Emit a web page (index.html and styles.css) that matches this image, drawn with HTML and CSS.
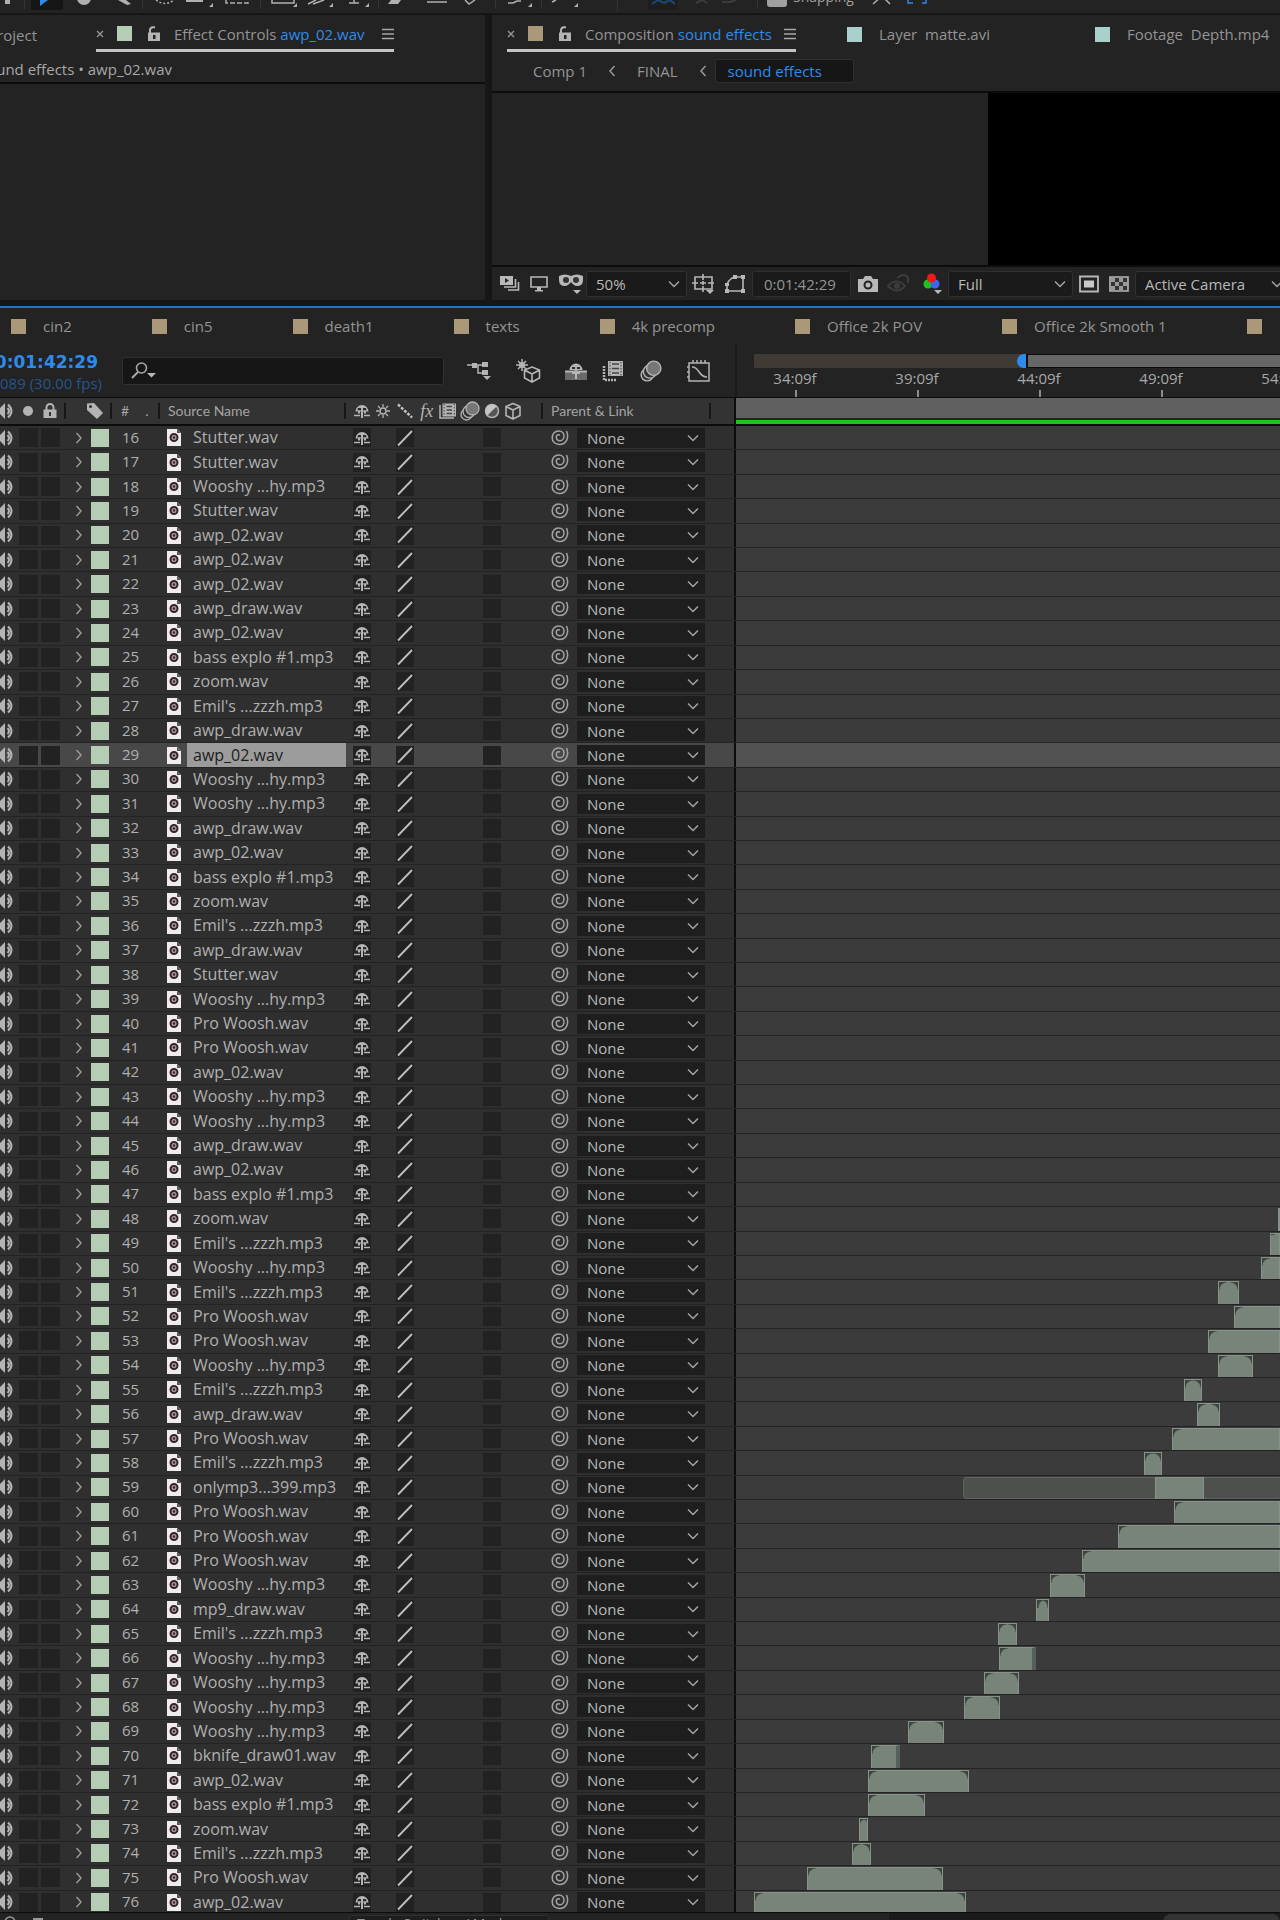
FILE: index.html
```html
<!DOCTYPE html>
<html lang="en">
<head>
<meta charset="utf-8">
<title>sound effects – Timeline</title>
<meta name="viewport" content="width=device-width, initial-scale=1">
<link rel="stylesheet" href="styles.css">
</head>
<body>
<svg class="sprite" aria-hidden="true">
  <symbol id="i-speaker" viewBox="0 0 20 18"><path d="M0 6h4l5-5v16l-5-5H0z" fill="#b4b4b4"/><path d="M11.500 6q3 3 0 6M12 2.500q7 6.500 0 13" fill="none" stroke="#b4b4b4" stroke-width="2"/></symbol>
  <symbol id="i-lock" viewBox="0 0 14 16"><path d="M3.500 7V4.500a3.500 3.500 0 0 1 7 0V7" fill="none" stroke="#b4b4b4" stroke-width="2"/><path d="M0.500 6.500h13V15H.5z" fill="#b4b4b4"/><path d="M6 9h2v4H6z" fill="#333"/></symbol>
  <symbol id="i-unlock" viewBox="0 0 14 16"><path d="M3 8V4.500q0-3 3-3.200h2" fill="none" stroke="#b4b4b4" stroke-width="2"/><path d="M1 6.500h12V15H1z" fill="#b4b4b4"/><path d="M6 9h2.500v4H6z" fill="#232323"/></symbol>
  <symbol id="i-tag" viewBox="0 0 18 18"><path d="M1 1.500 8 1l9 10-6 6L1 8z" fill="#b4b4b4"/><circle cx="4.500" cy="4.500" r="1.500" fill="#333"/></symbol>
  <symbol id="i-shy" viewBox="0 0 18 16"><path d="M2.500 8.500a6.500 6.500 0 0 1 13 0z" fill="#b4b4b4"/><path d="M5 5h3v2.500H4.500zM10 5h3l.5 2.500H10z" fill="#2a2a2a"/><path d="M8 8h2v7H8zM5 7.500h2v3H5zM11 7.500h2v3h-2z" fill="#b4b4b4"/><path d="M1 12.500h6M11 12.500h6" stroke="#b4b4b4" stroke-width="1.600"/></symbol>
  <symbol id="i-sun" viewBox="0 0 16 16"><circle cx="8" cy="8" r="3" fill="none" stroke="#b4b4b4" stroke-width="1.500"/><path d="M8 1v3M8 12v3M1 8h3M12 8h3M3 3l2 2M11 11l2 2M13 3l-2 2M5 11l-2 2" stroke="#b4b4b4" stroke-width="1.300"/></symbol>
  <symbol id="i-dots" viewBox="0 0 16 16"><path d="m1 1.500 14 13" stroke="#c4c4c4" stroke-width="2.500" stroke-dasharray="2.800 1.500"/></symbol>
  <symbol id="i-film" viewBox="0 0 18 16"><path d="M1 2v13h14" fill="none" stroke="#b4b4b4" stroke-width="1.500"/><path d="M3.500.5H17v13H3.500z" fill="#b4b4b4"/><path d="M7.500 3.500h5.500M7.500 7h5.500M7.500 10.500h5.500" stroke="#444" stroke-width="1.300"/><path d="M5.200 1v12M15.300 1v12" stroke="#444" stroke-dasharray="1.500 1.500"/></symbol>
  <symbol id="i-blur" viewBox="0 0 20 20"><g stroke="#b4b4b4" stroke-width="1.300"><circle cx="6.500" cy="13.500" r="5.500" fill="#333"/><circle cx="9" cy="10.500" r="6" fill="#333"/><circle cx="12.500" cy="7.500" r="6.500" fill="#777"/></g></symbol>
  <symbol id="i-adjust" viewBox="0 0 16 16"><circle cx="8" cy="8" r="6.500" fill="#555" stroke="#b4b4b4" stroke-width="1.500"/><path d="M12.600 3.400A6.500 6.500 0 0 0 3.400 12.600z" fill="#c4c4c4"/></symbol>
  <symbol id="i-cube" viewBox="0 0 18 18"><path d="m9 1.500 7 3v9l-7 3.500-7-3.500v-9zM2 4.500 9 8l7-3.500M9 8v9" fill="none" stroke="#b4b4b4" stroke-width="1.600" stroke-linejoin="round"/></symbol>
  <symbol id="i-arrow" viewBox="0 0 8 12"><path d="m1.500 1 4.500 5-4.500 5" fill="none" stroke="#999" stroke-width="1.500"/></symbol>
  <symbol id="i-file" viewBox="0 0 14 17"><path d="M0 0h10l4 4v13H0z" fill="#f0ecee"/><path d="M10 0v4h4z" fill="#555"/><circle cx="7" cy="8.500" r="3.500" fill="#b9a0a0" stroke="#32242c" stroke-width="2"/><circle cx="7" cy="8.500" r="1.300" fill="#30283c"/></symbol>
  <symbol id="i-slash" viewBox="0 0 18 18"><path d="M2 16.500 16 2" stroke="#c0c0c0" stroke-width="1.800"/></symbol>
  <symbol id="i-spiral" viewBox="0 0 18 18"><path d="M15.500 2C18.500 9 15 15.500 8.500 15.500 4 15.500 1.200 12.500 1.200 9c0-4.500 3-7 6.300-7 3.700 0 5.500 2.500 5.500 5s-1.500 4.700-4 4.700S5.300 10 5.300 8 7 5.300 9 6" fill="none" stroke="#a4a4a4" stroke-width="1.500"/></symbol>
  <symbol id="i-chevron" viewBox="0 0 12 8"><path d="m1 1.500 5 5 5-5" fill="none" stroke="#a4a4a4" stroke-width="1.500"/></symbol>
  <symbol id="i-menu" viewBox="0 0 12 12"><path d="M0 1.500h12M0 6h12M0 10.500h12" stroke="#a8a8a8" stroke-width="1.500"/></symbol>
  <symbol id="i-x" viewBox="0 0 8 8"><path d="m1 1 6 6M7 1 1 7" stroke="#949494" stroke-width="1.400"/></symbol>
</svg>

<header class="toolbar" role="toolbar" aria-label="Tools">
  <svg class="tools" viewBox="0 0 760 13">
    <g fill="#b0b0b0"><path d="M5 0h5v4H5z"/><circle cx="84" cy="-2" r="7"/><path d="m118 0 9 5 4-1-5-4zM186 0h17v2h-17zM388 4l3-4h10l-3 4zM213 7V3l-4 4zM297 7V3l-4 4zM333 7V3l-4 4zM369 7V3l-4 4zM532 7V3l-4 4zM578 7V3l-4 4z"/></g>
    <path d="M31 0h32v10H31z" fill="#161616"/><path d="M40 0h8l-8 6z" fill="#2d8ceb"/>
    <g stroke="#b0b0b0" stroke-width="1.500" fill="none"><path d="M156 0q9 7 18 0" stroke-dasharray="2 2"/><path d="M226 0v3h22V0" stroke-dasharray="5 2"/><path d="M272 0v3h22V0M308 4l8-4M313 4l11-4M349 3h10M354 0v3M427 2h20M465 0l4 4 6-4M508 3h5l4-2h4M552 2l4-2"/></g>
    <path d="M24.500 0v9M142.500 0v9M260.500 0v9M378.500 0v9M495.500 0v9M541.500 0v9M617.500 0v11M757.500 0v9" stroke="#343434"/>
    <path d="M648 0h30v10h-30z" fill="#1e1e1e"/><path d="m652 4 6-4 6 3 6-3 5 4" stroke="#1c4a75" stroke-width="2" fill="none"/><path d="m696 3 6-3 5 3M722 2h8l6-2" stroke="#3c3c3c" stroke-width="2" fill="none"/>
  </svg>
  <label class="snap"><input type="checkbox" checked><span>Snapping</span></label>
  <svg class="snap-tools" viewBox="0 0 60 13"><path d="m3 4 9-8 8 8" stroke="#b0b0b0" stroke-width="1.500" fill="none"/><path d="M38 0v3h5M52 3h4V0" stroke="#2d8ceb" stroke-width="1.500" fill="none"/></svg>
</header>

<div class="workspace">
  <section class="panel effects">
    <nav class="tabs">
      <a class="cut project" href="#project"><span>Project</span></a>
      <div class="tab active">
        <button class="plain" aria-label="Close"><svg class="s8"><use href="#i-x"/></svg></button>
        <i class="swatch green"></i><svg class="lock"><use href="#i-unlock"/></svg>
        <a href="#fx">Effect Controls <b>awp_02.wav</b></a>
        <button class="plain" aria-label="Panel menu"><svg class="s12"><use href="#i-menu"/></svg></button>
      </div>
    </nav>
    <p class="cut subject"><span>sound effects • awp_02.wav</span></p>
    <div class="panel-body"></div>
  </section>

  <section class="panel composition">
    <nav class="tabs">
      <div class="tab active">
        <button class="plain" aria-label="Close"><svg class="s8"><use href="#i-x"/></svg></button>
        <i class="swatch tan"></i><svg class="lock"><use href="#i-unlock"/></svg>
        <a href="#comp">Composition <b>sound effects</b></a>
        <button class="plain" aria-label="Panel menu"><svg class="s12"><use href="#i-menu"/></svg></button>
      </div>
      <a class="tab side" href="#layer"><i class="swatch aqua"></i><span>Layer&nbsp; matte.avi</span></a>
      <a class="tab side" href="#footage"><i class="swatch aqua"></i><span>Footage&nbsp; Depth.mp4</span></a>
    </nav>
    <nav class="crumbs">
      <a href="#comp1">Comp 1</a><svg class="back"><use href="#i-arrow"/></svg><a href="#final">FINAL</a><svg class="back last"><use href="#i-arrow"/></svg><a class="current" href="#sfx">sound effects</a>
    </nav>
    <div class="viewer"><div class="frame"></div></div>
    <div class="viewbar">
      <button class="plain" aria-label="Always preview"><svg width="22" height="18" viewBox="0 0 22 18"><path d="M1 1h13v9H1z" fill="#b8b8b8"/><path d="m6 3 4 2.500L6 8z" fill="#232323"/><path d="M16.500 4v8H5M19.500 7v8H9" fill="none" stroke="#b8b8b8" stroke-width="1.600"/></svg></button>
      <button class="plain" aria-label="Primary viewer"><svg width="20" height="18" viewBox="0 0 20 18"><path d="M2 2h16v10H2z" fill="none" stroke="#b8b8b8" stroke-width="1.600"/><path d="M8 12h4v3h2v1.500H6V15h2z" fill="#b8b8b8"/></svg></button>
      <button class="plain" aria-label="3D glasses"><svg width="26" height="22" viewBox="-2 0 26 22"><path d="M0 3q6-3 12 0 6-3 12 0v4q0 6-6 6-3 0-6-4-3 4-6 4-6 0-6-6z" fill="#b8b8b8"/><circle cx="7" cy="7" r="3" fill="#333"/><circle cx="17" cy="7" r="3" fill="#333"/><path d="M14 17h8l-4 4z" fill="#b8b8b8"/></svg></button>
      <span class="drop zoom"><select aria-label="Magnification"><option>50%</option></select><svg class="chev"><use href="#i-chevron"/></svg></span>
      <button class="plain" aria-label="Grid and guides"><svg width="22" height="22" viewBox="0 0 22 22"><path d="M3 4h17v12H3zM0 10h6M16 10h6M11 1v6M11 13v6M8 10h6M11 8v4" fill="none" stroke="#b8b8b8" stroke-width="1.600"/><path d="M14 17h8l-4 4z" fill="#b8b8b8"/></svg></button>
      <button class="plain" aria-label="Mask visibility"><svg width="24" height="20" viewBox="-2 0 24 20"><path d="M3 17V10q3-6 8-7h8v14z" fill="none" stroke="#b8b8b8" stroke-width="1.600"/><path d="M1 15h4v4H1zM17 15h4v4h-4zM17 1h4v4h-4zM9 1h4v4H9zM1 9h4v3H1z" fill="#b8b8b8"/></svg></button>
      <input class="time" aria-label="Preview time" value="0:01:42:29">
      <button class="plain" aria-label="Snapshot"><svg width="22" height="18" viewBox="0 0 22 18"><path d="M1 4h5l2-3h6l2 3h5v13H1z" fill="#b8b8b8"/><circle cx="11" cy="10" r="3.500" fill="#b8b8b8" stroke="#232323" stroke-width="2"/></svg></button>
      <button class="plain" aria-label="Show snapshot"><svg width="22" height="20" viewBox="0 0 22 20"><path d="M1 12q8-9 17 0-8 9-17 0z" fill="none" stroke="#3c3c3c" stroke-width="2"/><circle cx="10" cy="12" r="3" fill="#3c3c3c"/><path d="M10 4q8-6 11 0v5" fill="none" stroke="#3c3c3c" stroke-width="2"/></svg></button>
      <button class="plain" aria-label="Channels"><svg width="25" height="22" viewBox="-5 0 25 22"><circle cx="6" cy="11" r="4.500" fill="#1dc21d"/><circle cx="13" cy="11" r="4.500" fill="#4066f0"/><circle cx="9.500" cy="5" r="4.500" fill="#f01818"/><path d="M12 17h8l-4 4z" fill="#b8b8b8"/></svg></button>
      <span class="drop res"><select aria-label="Resolution"><option>Full</option></select><svg class="chev"><use href="#i-chevron"/></svg></span>
      <button class="plain" aria-label="Region of interest"><svg width="22" height="18" viewBox="0 0 22 18"><path d="M2 1.500h18v15H2z" fill="none" stroke="#b8b8b8" stroke-width="1.800"/><path d="M6 5.500h10v7H6z" fill="#c8c8c8"/></svg></button>
      <button class="plain" aria-label="Transparency grid"><svg width="22" height="18" viewBox="0 0 22 18"><path d="M2 2h18v14H2z" fill="#333" stroke="#b8b8b8" stroke-width="1.600"/><path d="M3 3h4v4H3zM11 3h4v4h-4zM7 7h4v4H7zM15 7h4v4h-4zM3 11h4v4H3zM11 11h4v4h-4z" fill="#999"/></svg></button>
      <span class="drop cam"><select aria-label="3D view"><option>Active Camera</option></select><svg class="chev"><use href="#i-chevron"/></svg></span>
    </div>
  </section>
</div>

<main class="timeline">
  <nav class="comps">
    <a href="#c1"><i class="swatch tan"></i>cin2</a>
    <a href="#c2"><i class="swatch tan"></i>cin5</a>
    <a href="#c3"><i class="swatch tan"></i>death1</a>
    <a href="#c4"><i class="swatch tan"></i>texts</a>
    <a href="#c5"><i class="swatch tan"></i>4k precomp</a>
    <a href="#c6"><i class="swatch tan"></i>Office 2k POV</a>
    <a href="#c7"><i class="swatch tan"></i>Office 2k Smooth 1</a>
    <a href="#c8" aria-label="Next composition"><i class="swatch tan"></i></a>
  </nav>
  <div class="controls">
    <div class="controls-left">
      <div class="clock"><div class="cut now"><span>0:01:42:29</span></div><div class="cut fps"><span>3089 (30.00 fps)</span></div></div>
      <div class="search"><svg width="26" height="18" viewBox="0 0 26 18"><circle cx="10.500" cy="6" r="5" fill="none" stroke="#a8a8a8" stroke-width="1.600"/><path d="m7 10-6 6" stroke="#a8a8a8" stroke-width="2"/><path d="M16 11h9l-4.500 4.500z" fill="#b8b8b8"/></svg><input type="search" aria-label="Search layers"></div>
      <div class="modes">
        <button class="plain" aria-label="Mini-flowchart"><svg width="26" height="22" viewBox="0 0 26 22"><path d="M1 5h6M9 5h8M12 5v8h5" stroke="#b4b4b4" stroke-width="1.500" fill="none"/><path d="M6 3h5v5H6zM16 2h6v5h-6zM16 10h6v5h-6zM17 16h8l-4 4z" fill="#b4b4b4"/></svg></button>
        <button class="plain" aria-label="Draft 3D"><svg width="28" height="26" viewBox="0 0 28 26"><path d="M8 1v12M2 7h12M4 3l8 8M12 3l-8 8" stroke="#b4b4b4" stroke-width="1.500"/><circle cx="8" cy="7" r="3" fill="#b4b4b4"/><path d="m18 9 7.500 3v8L18 24l-7.500-4v-8zM10.500 12l7.500 4 7.500-4M18 16v8" fill="#232323" stroke="#b4b4b4" stroke-width="1.600"/></svg></button>
        <button class="plain" aria-label="Hide shy layers"><svg width="24" height="20" viewBox="0 0 24 20"><path d="M1 11h22v8H1z" fill="#6a6a6a"/><path d="M5.500 9a6.500 6.500 0 0 1 13 0zM11 8h2v10h-2zM1 9.500h22v2H1zM8 11h8v2H8z" fill="#b4b4b4"/><path d="M8 6h3v2H8zM13 6h3v2h-3z" fill="#333"/></svg></button>
        <button class="plain" aria-label="Frame blending"><svg width="22" height="22" viewBox="0 0 22 22"><path d="M2 6v14h13" fill="none" stroke="#b4b4b4" stroke-width="2.500" stroke-dasharray="2 1"/><path d="M6 1h15v15H6z" fill="#b4b4b4"/><path d="M10 4h7M10 8.500h7M10 13h7" stroke="#444" stroke-width="1.300"/><path d="M8 2v14M19 2v14" stroke="#444" stroke-dasharray="1.500 1.500"/></svg></button>
        <button class="plain" aria-label="Motion blur"><svg width="22" height="22"><use href="#i-blur"/></svg></button>
        <button class="plain" aria-label="Graph editor"><svg width="24" height="24" viewBox="0 0 24 24"><path d="M2 4h20v18H2zM5 8c8 0 6 10 15 10M6 4V1M10 4V1M14 4V1M18 4V1M2 8H0M2 13H0M2 18H0" fill="none" stroke="#b4b4b4" stroke-width="1.500"/></svg></button>
      </div>
    </div>
    <div class="ruler">
      <div class="navigator"><i class="before"></i><i class="knob"></i><i class="after"></i></div>
      <div class="ticks"><span>34:09f</span><span>39:09f</span><span>44:09f</span><span>49:09f</span><span>54:09f</span></div>
    </div>
  </div>
  <table class="layers">
    <thead><tr>
      <th class="av"><svg class="spk"><use href="#i-speaker"/></svg><i class="solo"></i><svg class="lk"><use href="#i-lock"/></svg></th>
      <th class="label"><svg class="s18"><use href="#i-tag"/></svg></th>
      <th class="num"><span>#</span><span>.</span></th>
      <th class="name">Source Name</th>
      <th class="switches"><svg class="s18"><use href="#i-shy"/></svg><svg class="s16"><use href="#i-sun"/></svg><svg class="s16"><use href="#i-dots"/></svg><em>fx</em><svg class="s18"><use href="#i-film"/></svg><svg class="s20"><use href="#i-blur"/></svg><svg class="s16"><use href="#i-adjust"/></svg><svg class="s18"><use href="#i-cube"/></svg></th>
      <th class="parent">Parent &amp; Link</th>
      <th class="pad"></th>
      <th class="track" aria-label="Work area"></th>
    </tr></thead>
    <tbody id="rows"></tbody>
  </table>
  <footer class="status">
    <div class="status-left"><svg width="60" height="8" viewBox="0 0 60 8"><circle cx="10" cy="9" r="5" fill="none" stroke="#999" stroke-width="1.500"/><path d="M33 5h10v4H33z" fill="#999"/></svg><button>Toggle Switches / Modes</button></div>
    <div class="scroll"><i></i></div>
  </footer>
</main>
<script src="layers.js"></script>
</body>
</html>
```

FILE: styles.css
```css
* { box-sizing: border-box; }
body {
  margin: 0; min-height: 100vh; display: flex; flex-direction: column;
  background: #161616; color: #949494; overflow-x: hidden;
  font: 15px/20px "Open Sans", "Noto Sans", sans-serif;
}
a { color: inherit; text-decoration: none; }
svg { display: block; flex: none; }
.sprite { position: absolute; width: 0; height: 0; }
.s8 { width: 8px; height: 8px; }
.s12 { width: 12px; height: 12px; }
.s16 { width: 16px; height: 16px; }
.s18 { width: 18px; height: 18px; }
.s20 { width: 20px; height: 20px; }
.plain { background: none; border: 0; padding: 0; display: block; flex: none; }
select, input { font: inherit; color: inherit; border: 0; margin: 0; padding: 0; background: none; outline: 0; min-width: 0; }
select { appearance: none; }
.swatch { width: 15px; height: 15px; flex: none; display: block; }
.green { background: #b5ccb5; }
.tan { background: #ab9878; }
.aqua { background: #a9cfcb; }
.cut { display: flex; justify-content: flex-end; overflow: hidden; white-space: nowrap; }
.chev { width: 12px; height: 8px; flex: none; }

/* Tool bar */
.toolbar { height: 13px; overflow: hidden; display: flex; background: #232323; }
.tools { width: 760px; height: 13px; }
.snap { display: flex; gap: 6px; width: 110px; padding-left: 7px; flex: none; margin-top: -13px; line-height: 20px; font-size: 14px; color: #a0a0a0; }
.snap input { appearance: none; width: 20px; height: 20px; border-radius: 3px; background: #a0a0a0; flex: none; }
.snap-tools { width: 60px; height: 13px; }

/* Upper panels */
.workspace { display: grid; grid-template-columns: 485px minmax(0, 1fr); gap: 7px; margin-top: 2px; height: 285px; }
.panel { background: #232323; display: flex; flex-direction: column; min-width: 0; overflow: hidden; }
.tabs { display: flex; height: 37px; flex: none; white-space: nowrap; }
.tabs b { font-weight: 400; color: #2d8ceb; }
.tab { display: flex; align-items: center; }
.tab.active { border-bottom: 3px solid #c4c4c4; padding-top: 3px; }
.project { width: 37px; margin-right: 59px; padding-top: 10px; }
.active .swatch { margin: 0 15px 0 13px; }
.lock { width: 14px; height: 16px; margin-right: 13px; }
.active a { margin-right: 12px; }
.effects .active a { margin-right: 17px; }
.subject { width: 172px; margin: 0; height: 30px; padding-top: 7px; color: #a8a8a8; }
.panel-body { flex: 1; border-top: 2px solid #0c0c0c; }
.composition .tabs { padding-left: 15px; }
.side { gap: 17px; margin-left: 51px; padding-top: 1px; }
.side + .side { margin-left: 105px; }
.crumbs { display: flex; align-items: center; height: 39px; flex: none; padding: 0 0 2px 41px; }
.back { width: 8px; height: 12px; margin: 0 21px; transform: scaleX(-1); }
.back.last { margin-right: 8px; }
.current { width: 139px; height: 24px; padding: 1px 12px; border: 1px solid #303030; border-radius: 3px; background: #161616; color: #2d8ceb; }
.viewer { flex: 1; border: solid #0c0c0c; border-width: 2px 0; display: flex; }
.frame { flex: 1; margin-left: 496px; background: #000; }
.viewbar { display: flex; align-items: center; height: 33px; flex: none; padding-left: 7px; color: #b8b8b8; gap: 8px; }
.drop, .time { display: flex; align-items: center; height: 26px; border: 1px solid #303030; border-radius: 3px; background: #1a1a1a; flex: none; padding: 0 6px 0 9px; }
.drop select { flex: 1; }
.viewbar .time { width: 99px; padding-left: 11px; color: #949494; margin: 0 -2px; }
.zoom, .res, .cam { margin: 0 -3px; }
.zoom { width: 101px; margin-left: -5px; }
.res { width: 125px; margin-left: -2px; }
.cam { width: 155px; }

/* Timeline */
.timeline { flex: 1; display: flex; flex-direction: column; margin-top: 6px; border-top: 2px solid #2b74bd; background: #232323; min-height: 0; }
.comps { display: flex; gap: 80px; height: 36px; padding: 0 0 0 11px; overflow: hidden; white-space: nowrap; flex: none; }
.comps a { display: flex; align-items: center; gap: 17px; }
.controls { display: grid; grid-template-columns: 735px minmax(0, 1fr); height: 54px; flex: none; border-bottom: 1px solid #0c0c0c; }
.controls-left { display: flex; align-items: center; }
.clock { width: 122px; flex: none; padding-top: 3px; }
.now { width: 98px; font: 700 17px/22px "DejaVu Sans", sans-serif; color: #2d8ceb; }
.fps { width: 102px; color: #24568c; }
.search { display: flex; align-items: center; gap: 6px; width: 322px; height: 28px; padding: 0 8px; border: 1px solid #303030; border-radius: 3px; background: #161616; }
.search input { flex: 1; }
.modes { display: grid; grid-template-columns: 48px 50px 38px 38px 47px 30px; align-items: center; padding-left: 22px; }
.ruler { display: flex; flex-direction: column; border-left: 2px solid #1a1a1a; padding-top: 10px; }
.navigator { display: grid; grid-template-columns: 271px 3px 1fr; height: 14px; margin-left: 17px; }
.before { background: #3f3a33; }
.after { background: #666; border: solid #0c0c0c; border-width: 1px 0; }
.knob { position: relative; background: #0c0c0c; }
.knob::after { content: ""; position: absolute; right: 2px; top: 0; width: 9px; height: 14px; background: #2d8ceb; border-radius: 7px 0 0 7px; }
.ticks { display: grid; grid-template-columns: repeat(5, 122px); overflow: hidden; color: #a8a8a8; }
.ticks span { text-align: center; height: 29px; padding-right: 6px; background: linear-gradient(#8c8c8c, #8c8c8c) 58px 22px / 2px 7px no-repeat; }

/* Layer table */
.layers { flex: 1; display: flex; flex-direction: column; }
.layers tbody { flex: 1; display: grid; grid-auto-rows: minmax(24px, 1fr); }
.layers tr { display: grid; grid-template-columns: 66px 46px 48px 186px 197px 168px 25px minmax(0, 1fr); background: #2f2f2f; }
.layers thead tr { height: 28px; background: #333; border-bottom: 2px solid #0c0c0c; }
.layers th, .layers td { display: flex; align-items: center; padding: 0; font-weight: 400; text-align: left; white-space: nowrap; min-width: 0; }
.layers thead .av, .layers thead .label, .layers thead .num, .layers thead .name, .layers thead .switches, .layers thead .parent {
  background: linear-gradient(#161616, #161616) 100% 5px / 2px 16px no-repeat;
}
.layers thead { font: 14px/20px Lato, "Open Sans", sans-serif; color: #a4a4a4; }
.layers tbody tr { border-bottom: 1px solid #232323; color: #b0b0b0; }
.layers .av { overflow: hidden; gap: 3px; }
.spk { width: 20px; height: 18px; margin: 0 0 0 -4px; }
.av .box { width: 19px; height: 19px; background: #222; }
.layers .solo { width: 10px; height: 10px; border-radius: 50%; background: #b4b4b4; margin: 0 7px 0 4px; }
.lk { width: 14px; height: 16px; }
thead .label { padding-left: 20px; }
tbody .label { padding-left: 9px; gap: 8px; }
tbody .label svg { width: 8px; height: 12px; }
tbody .label .swatch { width: 18px; height: 18px; }
.layers thead .num { padding-left: 9px; gap: 16px; }
.layers tbody .num { padding-left: 10px; padding-bottom: 2px; font-size: 15px; }
.layers thead .name { padding-left: 8px; }
.layers tbody .name { padding-left: 7px; gap: 6px; font-size: 16px; }
.name svg { width: 14px; height: 17px; }
.name span { flex: 1; height: 100%; padding: 0 0 1px 6px; display: flex; align-items: center; }
.layers .switches { display: grid; grid-template-columns: repeat(8, 1fr); justify-items: center; padding: 0 19px 0 5px; }
.switches em { font: italic 18px/20px "Liberation Serif", serif; color: #b4b4b4; }
.dark { width: 18px; height: 19px; background: #222; display: flex; align-items: center; }
.layers .parent { padding-left: 8px; }
.layers tbody .parent { gap: 8px; }
.layers .pick { display: flex; align-items: center; width: 128px; height: 20px; padding: 0 6px 0 10px; background: #1e1e1e; font-size: 15px; color: #b8b8b8; }
.pick select { flex: 1; line-height: 18px; }
.layers .pad { border-right: 2px solid #0c0c0c; }
.layers .track { position: relative; overflow: hidden; background: #3b3b3b; align-items: stretch; }
.layers thead .track { background: #606060; border-bottom: 4px solid #1dc423; box-shadow: inset 0 -2px #242424; }
.layers tbody .selected { background: #484848; }
.layers .selected .track { background: #525252; }
.selected .name span { background: #9c9c9c; color: #1c1c1c; }

.clip { position: absolute; top: 1px; bottom: 0; background: #78837a; border: 1px solid #87928a; border-bottom: 0; }
.fade::before, .fade-out::after { content: ""; position: absolute; top: 0; width: 8px; height: 8px; max-width: 50%; }
.fade::before { left: 0; background: radial-gradient(8px 8px at 100% 100%, transparent 88%, #3c463e 100%); }
.fade-out::after { right: 0; background: radial-gradient(8px 8px at 0 100%, transparent 88%, #3c463e 100%); }
.narrow::before { background: radial-gradient(5px 8px at 100% 100%, transparent 80%, #3c463e 100%); }
.narrow::after { background: radial-gradient(5px 8px at 0 100%, transparent 80%, #3c463e 100%); }
.tail { border-right: 4px solid #56605a; }
.shell { background: #4e504d; border: 1px solid #5d635e; border-radius: 3px; }

/* Bottom bar */
.status { display: grid; grid-template-columns: 889px minmax(0, 1fr); height: 8px; margin-top: -3px; position: relative; overflow: hidden; background: #232323; border-top: 1px solid #0c0c0c; flex: none; }
.status-left { display: flex; align-items: flex-start; }
.status button { margin: 2px 0 0 289px; width: 200px; height: 24px; border: 1px solid #303030; border-radius: 3px; background: #1e1e1e; color: #949494; font: 14px/16px "Open Sans", sans-serif; padding: 0 0 6px 7px; text-align: left; }
.scroll { background: #1a1a1a; overflow: hidden; padding: 1px 0 0 274px; }
.scroll i { display: block; height: 16px; border-radius: 8px; background: #333; }
```

FILE: layers.js
```js
const FILES = {
  s: 'Stutter.wav', h: 'Wooshy ...hy.mp3', a: 'awp_02.wav', d: 'awp_draw.wav',
  b: 'bass explo #1.mp3', z: 'zoom.wav', e: "Emil's ...zzzh.mp3", p: 'Pro Woosh.wav',
  o: 'onlymp3...399.mp3', m: 'mp9_draw.wav', k: 'bknife_draw01.wav'
};
const FIRST = 16;
const SELECTED = 29;
const ORDER = 'sshsaaadabzedahhdabzedshppahhdabzehepphedpeopppmehhhhkabzepa'.split('');
ORDER.splice(47, 0, 'h');

// layer: [start, end, style]; no end means the clip runs on past the view
const CLIPS = {
  48: [542], 49: [534], 50: [525], 51: [482, 503], 52: [498], 53: [472],
  54: [482, 517], 55: [448, 466], 56: [461, 484], 57: [436], 58: [408, 426],
  59: [419, 468, 'plain'], 60: [438], 61: [382], 62: [346], 63: [314, 349],
  64: [300, 313], 65: [262, 281], 66: [263, 300, 'tail'], 67: [248, 283],
  68: [228, 264], 69: [172, 208], 70: [135, 164, 'tail'], 71: [132, 233],
  72: [132, 189], 73: [123, 132], 74: [116, 135], 75: [71, 207], 76: [18, 230]
};

const icon = (id, cls) => `<svg class="${cls || ''}"><use href="#i-${id}"/></svg>`;

function clip(n) {
  const c = CLIPS[n];
  if (!c) return '';
  const [start, end, kind] = c;
  let cls = kind === 'plain' ? '' : kind === 'tail' ? 'fade tail' : end ? 'fade fade-out' : 'fade';
  if (end && end - start < 15) cls += ' narrow';
  const size = end ? `width:${end - start}px` : 'right:0';
  const shell = n === 59 ? '<i class="clip shell" style="left:227px;right:-4px"></i>' : '';
  return `${shell}<i class="clip ${cls}" style="left:${start}px;${size}"></i>`;
}

document.getElementById('rows').innerHTML = ORDER.map((key, i) => {
  const n = FIRST + i;
  return `<tr class="${n === SELECTED ? 'selected' : ''}">
    <td class="av">${icon('speaker', 'spk')}<i class="box"></i><i class="box"></i></td>
    <td class="label">${icon('arrow')}<i class="swatch green"></i></td>
    <td class="num">${n}</td>
    <td class="name">${icon('file')}<span>${FILES[key]}</span></td>
    <td class="switches"><i class="dark">${icon('shy', 's18')}</i><i></i><i class="dark">${icon('slash', 's18')}</i><i></i><i></i><i></i><i class="dark"></i><i></i></td>
    <td class="parent">${icon('spiral', 's18')}<label class="pick"><select aria-label="Parent of layer ${n}"><option>None</option></select>${icon('chevron', 'chev')}</label></td>
    <td class="pad"></td>
    <td class="track">${clip(n)}</td>
  </tr>`;
}).join('');
```
